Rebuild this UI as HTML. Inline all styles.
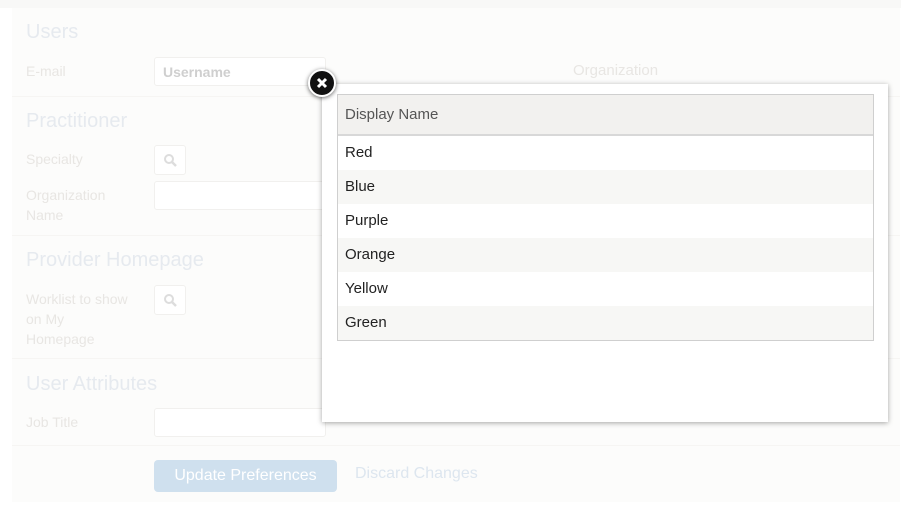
<!DOCTYPE html>
<html><head><style>
body{margin:0;width:901px;height:510px;background:#fff;font-family:"Liberation Sans",sans-serif;position:relative;overflow:hidden}
.a{position:absolute}
.panel{left:12px;top:8px;width:888px;height:494px;background:#fcfcfb}
.sec{left:12px;width:888px;border-top:1px solid #f6f5f3}
h2{position:absolute;margin:0;font-weight:normal;font-size:20px;color:#e6eaef;left:26px}
.lb{position:absolute;left:26px;font-size:14px;color:#e8e6e3;line-height:20px}
.in{position:absolute;left:154px;width:170px;height:27px;background:#fff;border:1px solid #f1f0ee;border-radius:3px}
.sb{position:absolute;left:154px;width:30px;height:28px;background:#fff;border:1px solid #f1f0ee;border-radius:3px}
.row{height:34px;line-height:34px;padding-left:7px;font-size:15px;color:#222}
</style></head><body>
<div class="a" style="left:0;top:0;width:901px;height:8px;background:#f8f8f7"></div>
<div class="a panel"></div>
<div class="a sec" style="top:96px"></div>
<div class="a sec" style="top:235px"></div>
<div class="a sec" style="top:358px"></div>
<div class="a sec" style="top:445px"></div>
<h2 style="top:21px">Users</h2>
<div class="lb" style="top:61px">E-mail</div>
<div class="in" style="top:57px"><span style="position:absolute;left:8px;top:6px;font-size:14px;color:#cfcfcf;font-weight:bold">Username</span></div>
<div class="lb" style="top:61px;left:573px;font-size:15px">Organization</div>
<h2 style="top:110px">Practitioner</h2>
<div class="lb" style="top:149px">Specialty</div>
<div class="sb" style="top:145px"><svg class="a" style="left:8px;top:7px" width="14" height="14"><circle cx="6" cy="6" r="4" stroke="#ddd" stroke-width="2" fill="none"/><path d="M9 9l4 4" stroke="#ddd" stroke-width="2.5"/></svg></div>
<div class="lb" style="top:185px">Organization<br>Name</div>
<div class="in" style="top:181px"></div>
<h2 style="top:249px">Provider Homepage</h2>
<div class="lb" style="top:289px">Worklist to show<br>on My<br>Homepage</div>
<div class="sb" style="top:285px"><svg class="a" style="left:8px;top:7px" width="14" height="14"><circle cx="6" cy="6" r="4" stroke="#ddd" stroke-width="2" fill="none"/><path d="M9 9l4 4" stroke="#ddd" stroke-width="2.5"/></svg></div>
<h2 style="top:373px">User Attributes</h2>
<div class="lb" style="top:412px">Job Title</div>
<div class="in" style="top:408px"></div>
<div class="a" style="left:154px;top:460px;width:183px;height:32px;background:#cfe0ee;border-radius:4px;color:#fff;font-size:16px;text-align:center;line-height:32px">Update Preferences</div>
<div class="a" style="left:355px;top:465px;font-size:16px;color:#dde6ef">Discard Changes</div>
<div class="a" style="left:322px;top:84px;width:566px;height:338px;background:#fff;box-shadow:0 1px 5px rgba(0,0,0,.35)">
<div class="a" style="left:15px;top:10px;width:535px;border:1px solid #cfcfcf">
<div style="height:39px;line-height:39px;padding-left:7px;background:#f2f1ef;border-bottom:2px solid #d8d8d8;font-size:15px;color:#555">Display Name</div>
<div class="row">Red</div><div class="row" style="background:#f7f7f5">Blue</div><div class="row">Purple</div><div class="row" style="background:#f7f7f5">Orange</div><div class="row">Yellow</div><div class="row" style="background:#f7f7f5">Green</div>
</div></div>
<div class="a" style="left:308px;top:69px;width:24px;height:24px;border-radius:50%;background:#111;border:2px solid #fff;box-shadow:0 1px 4px rgba(0,0,0,.6)"><svg class="a" style="left:6px;top:6px" width="12" height="12"><path d="M2 2l8 8M10 2l-8 8" stroke="#fff" stroke-width="3"/></svg></div>
</body></html>
